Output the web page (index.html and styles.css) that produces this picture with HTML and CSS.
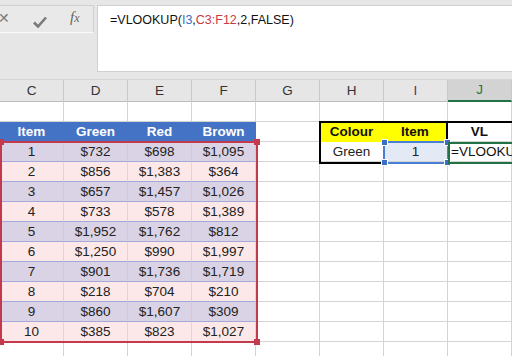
FILE: index.html
```html
<!DOCTYPE html>
<html lang="en">

<head>
  <meta charset="UTF-8">
  <meta name="viewport" content="width=device-width, initial-scale=1.0">
  <title>VLOOKUP sheet</title>
  <link rel="stylesheet" href="styles.css">
</head>

<body>
  <div class="formula-area">
    <div class="tools">
      <span class="tool cancel">&#x2715;</span>
      <span class="tool enter">
        <svg width="14" height="12" viewBox="0 0 14 12"><path d="M1 6.5 L5 10.5 L13 1.5" fill="none" stroke="#7a7a7a" stroke-width="2.6"/></svg>
      </span>
      <span class="tool fx"><i>f</i><i class="x">x</i></span>
    </div>
    <div class="formula-box">
      =VLOOKUP(<span class="ref-blue">I3</span>,<span class="ref-red">C3:F12</span>,2,FALSE)
    </div>
  </div>

  <div class="col-head">
    <div>C</div><div>D</div><div>E</div><div>F</div>
    <div>G</div><div>H</div><div class="ih">I</div><div class="active">J</div>
  </div>

  <div class="sheet">
    <div class="row">
      <div></div><div></div><div></div><div></div><div></div><div></div><div></div><div></div>
    </div>
    <div class="row">
      <div class="th">Item</div><div class="th">Green</div><div class="th">Red</div><div class="th">Brown</div>
      <div></div>
      <div class="yellow">Colour</div><div class="yellow edge">Item</div><div class="bold">VL</div>
    </div>
    <div class="row odd">
      <div class="d">1</div><div class="d">$732</div><div class="d">$698</div><div class="d">$1,095</div>
      <div></div><div class="plain">Green</div><div class="picked">1</div><div class="edit">=VLOOKUP(I3,C3:F12,2,FALSE)</div>
    </div>
    <div class="row even">
      <div class="d">2</div><div class="d">$856</div><div class="d">$1,383</div><div class="d">$364</div>
      <div></div><div></div><div></div><div></div>
    </div>
    <div class="row odd">
      <div class="d">3</div><div class="d">$657</div><div class="d">$1,457</div><div class="d">$1,026</div>
      <div></div><div></div><div></div><div></div>
    </div>
    <div class="row even">
      <div class="d">4</div><div class="d">$733</div><div class="d">$578</div><div class="d">$1,389</div>
      <div></div><div></div><div></div><div></div>
    </div>
    <div class="row odd">
      <div class="d">5</div><div class="d">$1,952</div><div class="d">$1,762</div><div class="d">$812</div>
      <div></div><div></div><div></div><div></div>
    </div>
    <div class="row even">
      <div class="d">6</div><div class="d">$1,250</div><div class="d">$990</div><div class="d">$1,997</div>
      <div></div><div></div><div></div><div></div>
    </div>
    <div class="row odd">
      <div class="d">7</div><div class="d">$901</div><div class="d">$1,736</div><div class="d">$1,719</div>
      <div></div><div></div><div></div><div></div>
    </div>
    <div class="row even">
      <div class="d">8</div><div class="d">$218</div><div class="d">$704</div><div class="d">$210</div>
      <div></div><div></div><div></div><div></div>
    </div>
    <div class="row odd">
      <div class="d">9</div><div class="d">$860</div><div class="d">$1,607</div><div class="d">$309</div>
      <div></div><div></div><div></div><div></div>
    </div>
    <div class="row even">
      <div class="d">10</div><div class="d">$385</div><div class="d">$823</div><div class="d">$1,027</div>
      <div></div><div></div><div></div><div></div>
    </div>
    <div class="row">
      <div></div><div></div><div></div><div></div><div></div><div></div><div></div><div></div>
    </div>

    <!-- overlays: reference range, lookup frame, selected cell, editing cell -->
    <div class="range-red">
      <span class="h tl"></span><span class="h tr"></span><span class="h bl"></span><span class="h br"></span>
    </div>
    <div class="frame"></div>
    <div class="sel-blue">
      <span class="h tl"></span><span class="h tr"></span><span class="h bl"></span><span class="h br"></span>
    </div>
    <div class="edit-box"></div>
  </div>
</body>

</html>
```

FILE: styles.css
```css
body {
  margin: 0;
  width: 512px;
  height: 356px;
  overflow: hidden;
  background-color: #fff;
  font-family: "Liberation Sans", Arial, sans-serif;
  color: #222;
}

.formula-area {
  height: 79px;
  background-color: #e6e6e6;
  display: flex;
  align-items: flex-start;
  padding-top: 5px;
  box-sizing: border-box;
}

.tools {
  width: 93px;
  height: 26px;
  margin-left: -1px;
  border: 1px solid #d0d0d0;
  border-bottom-color: #fafafa;
  background-color: #e9e9e9;
  position: relative;
  flex-shrink: 0;
}

.tool {
  position: absolute;
  top: 4px;
  color: #7a7a7a;
}

.cancel {
  left: -2px;
  font-size: 14px;
}

.enter {
  left: 33px;
  top: 8px;
}

.fx {
  left: 70px;
  top: 3px;
  font-family: "Liberation Serif", serif;
  font-size: 15px;
  color: #666;
}

.fx .x {
  font-size: 12px;
}

.formula-box {
  flex: 1;
  margin-left: 3px;
  height: 67px;
  background-color: #fff;
  border: 1px solid #d0d0d0;
  border-right: none;
  padding: 7px 0 0 12px;
  box-sizing: border-box;
  font-size: 12.5px;
  color: #111;
  white-space: nowrap;
}

.ref-blue {
  color: #3a6fc6;
}

.ref-red {
  color: #c93a45;
}

.col-head {
  display: grid;
  grid-template-columns: repeat(8, 64px);
  height: 23px;
  background-color: #e6e6e6;
  border-bottom: 1px solid #bdbdbd;
  box-sizing: border-box;
  border-top: 1px solid #d6d6d6;
}

.col-head div {
  border-right: 1px solid #c9c9c9;
  text-align: center;
  font-size: 13.5px;
  line-height: 21px;
  color: #333;
}

.col-head .ih {
  color: #6a2a6a;
}

.col-head .active {
  background-color: #d3d3d3;
  border-bottom: 2px solid #217346;
  color: #217346;
  line-height: 20px;
}

.sheet {
  position: relative;
}

.row {
  display: grid;
  grid-template-columns: repeat(8, 64px);
  height: 20px;
}

.row div {
  border-right: 1px solid #d4d4d4;
  border-bottom: 1px solid #d4d4d4;
  box-sizing: border-box;
  font-size: 13.5px;
  line-height: 19px;
  text-align: center;
  white-space: nowrap;
}

.row .th {
  background-color: #4472c4;
  border-color: #4472c4;
  color: #fff;
  font-weight: bold;
}

.row .yellow {
  background-color: #ffff00;
  border-right-color: #ffff00;
  border-bottom-color: #ffff00;
  font-weight: bold;
  color: #111;
}

.row .yellow.edge {
  border-right: 2px solid #000;
}

.row .bold {
  font-weight: bold;
  color: #111;
}

.row .plain {
  color: #222;
}

.row .picked {
  background-color: #e3eaf6;
  color: #222;
}

.row .edit {
  text-align: left;
  padding-left: 3px;
  color: #111;
  overflow: visible;
}

.odd .d {
  background-color: #d9d3e5;
  border-right-color: #d0c9de;
  border-bottom-color: #a3a9d9;
}

.even .d {
  background-color: #fce8e8;
  border-right-color: #e4d2d4;
  border-bottom-color: #a3a9d9;
}

.range-red {
  position: absolute;
  left: 0;
  top: 39px;
  width: 258px;
  height: 202px;
  border: 2px solid #c4394c;
  box-sizing: border-box;
}

.range-red .h {
  background-color: #c4394c;
}

.h {
  position: absolute;
  width: 6px;
  height: 6px;
}

.h.tl { left: -4px; top: -4px; }
.h.tr { right: -4px; top: -4px; }
.h.bl { left: -4px; bottom: -4px; }
.h.br { right: -4px; bottom: -4px; }

.frame {
  position: absolute;
  left: 319px;
  top: 19px;
  width: 200px;
  height: 43px;
  border: 2px solid #000;
  box-sizing: border-box;
}

.sel-blue {
  position: absolute;
  left: 383px;
  top: 39px;
  width: 66px;
  height: 23px;
  border: 2px solid #4a7fd6;
  box-sizing: border-box;
}

.sel-blue .h {
  width: 5px;
  height: 5px;
  background-color: #3a6fc6;
  border: 1px solid #fff;
}

.edit-box {
  position: absolute;
  left: 448px;
  top: 40px;
  width: 70px;
  height: 22px;
  border: 2px solid #217346;
  box-sizing: border-box;
}
```
